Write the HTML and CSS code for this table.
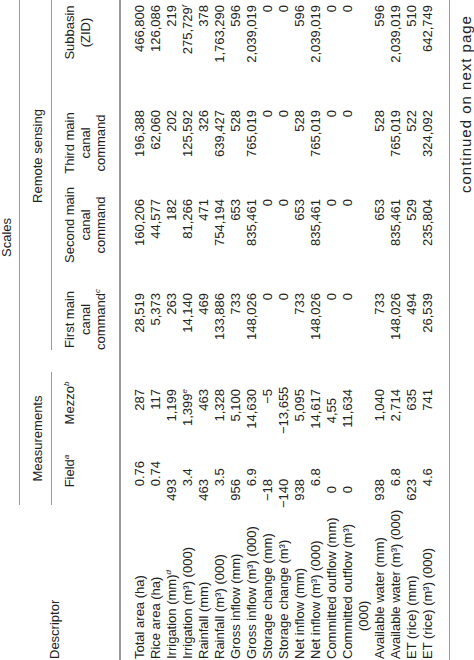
FILE: index.html
```html
<!DOCTYPE html>
<html lang="en">
<head>
<meta charset="utf-8">
<title>Table</title>
<link rel="stylesheet" href="styles.css">
</head>
<body>
<div class="page">
  <div class="tbl">
    <div class="desc-h">Descriptor</div>
    <div class="grp scales">Scales</div>
    <div class="grp meas">Measurements</div>
    <div class="grp rs">Remote sensing</div>
    <div class="row hd">
      <div>Field<sup>a</sup></div>
      <div>Mezzo<sup>b</sup></div>
      <div>First main<br>canal<br>command<sup>c</sup></div>
      <div>Second main<br>canal<br>command</div>
      <div>Third main<br>canal<br>command</div>
      <div>Subbasin<br>(ZID)</div>
    </div>
    <div class="rule thick"></div>

    <div class="row d"><div>Total area (ha)</div><div><span class="i">0</span>.76</div><div>287</div><div>28,519</div><div>160,206</div><div>196,388</div><div>466,800</div></div>
    <div class="row d"><div>Rice area (ha)</div><div><span class="i">0</span>.74</div><div>117</div><div>5,373</div><div>44,577</div><div>62,060</div><div>126,086</div></div>
    <div class="row d"><div>Irrigation (mm)<sup>d</sup></div><div><span class="i">493</span></div><div>1,199</div><div>263</div><div>182</div><div>202</div><div>219</div></div>
    <div class="row d"><div>Irrigation (m³) (000)</div><div><span class="i">3</span>.4</div><div>1,399<sup>e</sup></div><div>14,140</div><div>81,266</div><div>125,592</div><div>275,729<sup>f</sup></div></div>
    <div class="row d"><div>Rainfall (mm)</div><div><span class="i">463</span></div><div>463</div><div>469</div><div>471</div><div>326</div><div>378</div></div>
    <div class="row d"><div>Rainfall (m³) (000)</div><div><span class="i">3</span>.5</div><div>1,328</div><div>133,886</div><div>754,194</div><div>639,427</div><div>1,763,290</div></div>
    <div class="row d"><div>Gross inflow (mm)</div><div><span class="i">956</span></div><div>5,100</div><div>733</div><div>653</div><div>528</div><div>596</div></div>
    <div class="row d"><div>Gross inflow (m³) (000)</div><div><span class="i">6</span>.9</div><div>14,630</div><div>148,026</div><div>835,461</div><div>765,019</div><div>2,039,019</div></div>
    <div class="row d"><div>Storage change (mm)</div><div><span class="i">−18</span></div><div>−5</div><div>0</div><div>0</div><div>0</div><div>0</div></div>
    <div class="row d"><div>Storage change (m³)</div><div><span class="i">−140</span></div><div>−13,655</div><div>0</div><div>0</div><div>0</div><div>0</div></div>
    <div class="row d"><div>Net inflow (mm)</div><div><span class="i">938</span></div><div>5,095</div><div>733</div><div>653</div><div>528</div><div>596</div></div>
    <div class="row d"><div>Net inflow (m³) (000)</div><div><span class="i">6</span>.8</div><div>14,617</div><div>148,026</div><div>835,461</div><div>765,019</div><div>2,039,019</div></div>
    <div class="row d"><div>Committed outflow (mm)</div><div><span class="i z">0</span></div><div class="short">4,55</div><div>0</div><div>0</div><div>0</div><div>0</div></div>
    <div class="row d"><div class="wrap">Committed outflow (m³)<br>(000)</div><div><span class="i z">0</span></div><div>11,634</div><div>0</div><div>0</div><div>0</div><div>0</div></div>
    <div class="row d"><div>Available water (mm)</div><div><span class="i">938</span></div><div>1,040</div><div>733</div><div>653</div><div>528</div><div>596</div></div>
    <div class="row d"><div>Available water (m³) (000)</div><div><span class="i">6</span>.8</div><div>2,714</div><div>148,026</div><div>835,461</div><div>765,019</div><div>2,039,019</div></div>
    <div class="row d"><div>ET (rice) (mm)</div><div><span class="i">623</span></div><div>635</div><div>494</div><div>529</div><div>522</div><div>510</div></div>
    <div class="row d"><div>ET (rice) (m³) (000)</div><div><span class="i">4</span>.6</div><div>741</div><div>26,539</div><div>235,804</div><div>324,092</div><div>642,749</div></div>

    <div class="rule bottom"></div>
  </div>
  <div class="cont">continued on next page</div>
</div>
</body>
</html>
```

FILE: styles.css
```css
html, body {
  margin: 0;
  padding: 0;
  background: #fff;
}
body {
  width: 474px;
  height: 660px;
  overflow: hidden;
}
.page {
  width: 660px;
  height: 474px;
  overflow: hidden;
  transform-origin: 0 0;
  transform: translateY(660px) rotate(-90deg);
  font-family: "Liberation Sans", Arial, sans-serif;
  font-size: 13px;
  color: #222;
}
.tbl {
  display: grid;
  grid-template-columns: 152px 74px 62px 105px 84px 80px 141px;
  width: 698px;
  margin-top: -3px;
  line-height: 15px;
}
.row { display: contents; }

sup {
  font-size: 8px;
  line-height: 0;
  vertical-align: 5px;
  font-style: italic;
}

.desc-h {
  grid-column: 1;
  grid-row: 1 / 4;
  padding-top: 50px;
  padding-left: 1px;
}
.grp {
  text-align: center;
  border-bottom: 1px solid #999;
}
.scales {
  grid-column: 2 / 8;
  grid-row: 1;
  margin: 2px 0 0 3px;
  padding-right: 8px;
  padding-bottom: 5px;
}
.meas {
  grid-column: 2 / 4;
  grid-row: 2;
  margin: 10px 0 0 3px;
  padding-bottom: 6px;
}
.rs {
  grid-column: 4 / 8;
  grid-row: 2;
  margin: 10px 0 0 22px;
  padding-bottom: 6px;
}
.hd > * {
  grid-row: 3;
  padding: 10px 0;
  line-height: 15.5px;
  text-align: center;
}
.hd > :nth-child(1) { grid-column: 2; }
.hd > :nth-child(2) { grid-column: 3; }
.hd > :nth-child(3) { grid-column: 4; }
.hd > :nth-child(4) { grid-column: 5; }
.hd > :nth-child(5) { grid-column: 6; }
.hd > :nth-child(6) { grid-column: 7; }

.rule {
  grid-column: 1 / -1;
  background: #999;
}
.rule.thick {
  height: 2px;
  margin-bottom: 11.5px;
}
.rule.bottom {
  height: 1px;
  margin-top: 13px;
}

.d > * {
  line-height: 16px;
  text-align: right;
  white-space: nowrap;
}
.d > :nth-child(1) {
  text-align: left;
  padding-left: 1px;
}
.d > :nth-child(1).wrap {
  padding-left: 29px;
  text-indent: -28px;
}
.d > :nth-child(2) { text-align: left; }
.d > :nth-child(3) { padding-right: 17px; }
.d > :nth-child(3).short { padding-right: 26px; }
.d > :nth-child(4) { padding-right: 26px; }
.d > :nth-child(5) { padding-right: 16px; }
.d > :nth-child(6) { padding-right: 7px; }
.d > :nth-child(7) { padding-right: 43px; }

.i {
  display: inline-block;
  width: 29px;
  text-align: right;
}
.i.z {
  box-sizing: border-box;
  padding-right: 7px;
}

.cont {
  margin-top: 7px;
  padding-left: 467px;
  font-size: 15px;
  letter-spacing: 1px;
  line-height: 17px;
  white-space: nowrap;
}
```
